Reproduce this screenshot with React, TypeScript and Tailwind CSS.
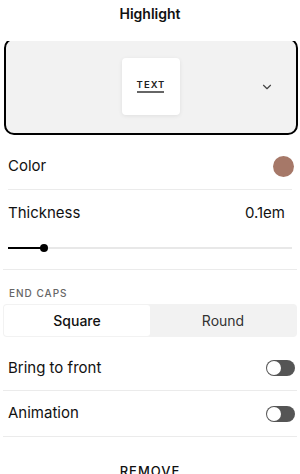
import { ChevronDown } from 'lucide-react'

const Toggle = () => (
  <div className="relative h-[16px] w-[29px] rounded-full bg-[#555]">
    <div className="absolute left-[1px] top-[1px] h-[14px] w-[14px] rounded-full bg-white" />
  </div>
)

export default function App() {
  return (
    <div
      className="flex h-[474px] w-[300px] flex-col overflow-hidden bg-white text-[#111]"
      style={{ fontFamily: 'Inter, "Noto Sans", sans-serif' }}
    >
      {/* header */}
      <div className="flex h-[41px] shrink-0 justify-center pt-[5px]">
        <span className="text-[14px] font-semibold leading-[18px]">Highlight</span>
      </div>

      <div className="flex-1 overflow-hidden">
        {/* preview box, scrolled a little */}
        <div className="relative -mt-[3px] ml-[4px] mr-[2px] flex h-[97px] items-center justify-center rounded-[10px] border-2 border-black bg-[#f2f2f2]">
          <div className="flex h-[57px] w-[58px] items-center justify-center rounded-[4px] bg-white shadow-[0_1px_4px_rgba(0,0,0,0.08)]">
            <div className="flex flex-col items-center">
              <span className="text-[9.5px] font-semibold leading-[10px] tracking-[1px] text-[#222]">TEXT</span>
              <div className="mt-[1px] h-[2.5px] w-[27px] bg-[#666]" />
            </div>
          </div>
          <ChevronDown className="absolute right-[22px] top-[40px] h-[14px] w-[14px] text-[#444]" strokeWidth={2} />
        </div>

        <div className="mt-[9px] px-2">
          <div className="flex h-[46px] items-center justify-between border-b border-[#ebebeb]">
            <span className="text-[15px]">Color</span>
            <div className="-mr-[2px] h-[21px] w-[21px] rounded-full bg-[#a67868]" />
          </div>

          <div className="flex h-[46px] items-center justify-between">
            <span className="text-[15px]">Thickness</span>
            <span className="mr-[7px] text-[15px]">0.1em</span>
          </div>
          <div className="relative h-[24px]">
            <div className="absolute left-0 right-0 top-[11px] h-[2px] bg-[#e8e8e8]" />
            <div className="absolute left-0 top-[11px] h-[2px] w-[36px] bg-black" />
            <div className="absolute left-[32px] top-[8px] h-[8px] w-[8px] rounded-full bg-black" />
          </div>
        </div>

        <div className="mx-[3px] mt-[9px] border-t border-[#ebebeb]" />

        <div className="px-[9px] pt-[18px] text-[10px] font-medium leading-[10px] tracking-[1px] text-[#666]">END CAPS</div>

        <div className="mx-[3px] mt-[6px] flex h-[33px] rounded-[4px] bg-[#f2f2f2] p-[1px]">
          <div className="flex flex-1 items-center justify-center rounded-[3px] bg-white text-[14px] font-medium">Square</div>
          <div className="flex flex-1 items-center justify-center text-[14px] text-[#333]">Round</div>
        </div>

        <div className="mt-[9px] px-[3px]">
          <div className="flex h-[45px] items-center justify-between border-b border-[#ebebeb] pl-[5px] pr-[2px]">
            <span className="text-[15px]">Bring to front</span>
            <Toggle />
          </div>
          <div className="flex h-[46px] items-center justify-between border-b border-[#ebebeb] pl-[5px] pr-[2px]">
            <span className="text-[15px]">Animation</span>
            <Toggle />
          </div>
        </div>

        <div className="flex justify-center pt-[25px]">
          <span className="text-[13px] font-medium tracking-[1px]">REMOVE</span>
        </div>
      </div>
    </div>
  )
}
